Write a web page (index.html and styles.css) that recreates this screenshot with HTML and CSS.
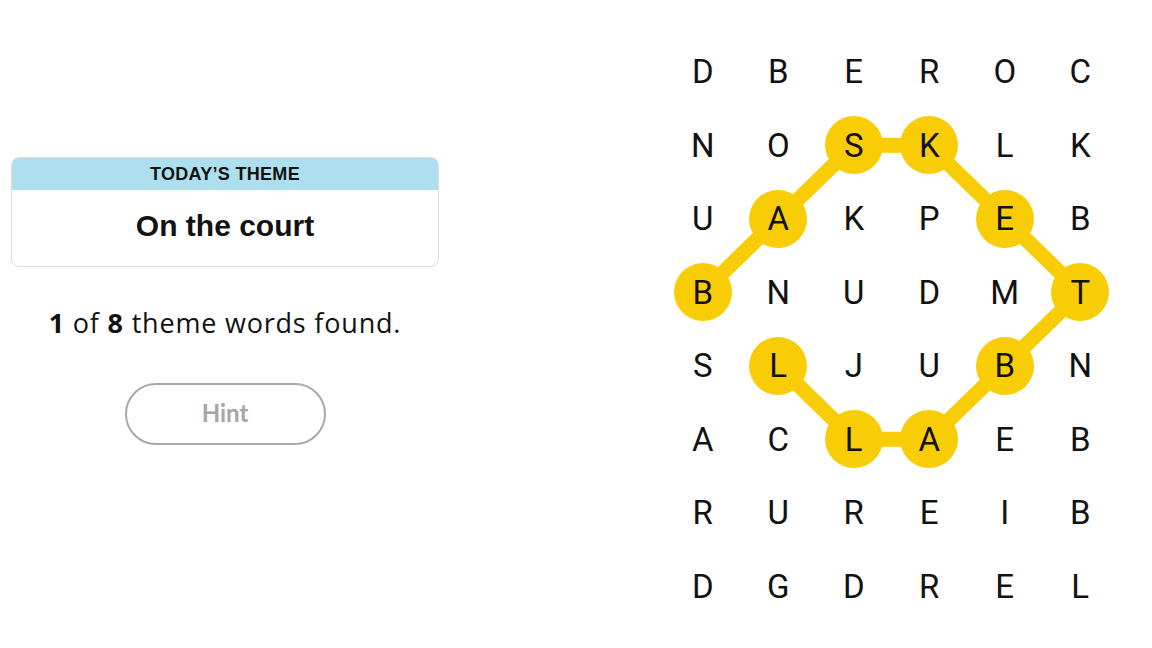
FILE: index.html
```html
<!DOCTYPE html>
<html lang="en">
<head>
<meta charset="utf-8">
<title>Strands</title>
<link rel="stylesheet" href="styles.css">
</head>
<body>
<main class="page">
  <section class="side">
    <div class="theme-card">
      <div class="theme-head">TODAY’S THEME</div>
      <div class="theme-body">On the court</div>
    </div>
    <p class="progress"><b>1</b> of <b>8</b> theme words found.</p>
    <button class="hint" type="button">Hint</button>
  </section>
  <section class="board">
    <svg class="path" width="453" height="588" viewBox="0 0 453 588" aria-hidden="true">
      <polyline points="37.75,257.25 113.25,183.75 188.75,110.25 264.25,110.25 339.75,183.75 415.25,257.25 339.75,330.75 264.25,404.25 188.75,404.25 113.25,330.75" fill="none" stroke="#f8cd05" stroke-width="15" stroke-linejoin="round" stroke-linecap="round"/>
    </svg>
    <div class="grid">
      <span class="cell">D</span><span class="cell">B</span><span class="cell">E</span><span class="cell">R</span><span class="cell">O</span><span class="cell">C</span>
      <span class="cell">N</span><span class="cell">O</span><span class="cell on">S</span><span class="cell on">K</span><span class="cell">L</span><span class="cell">K</span>
      <span class="cell">U</span><span class="cell on">A</span><span class="cell">K</span><span class="cell">P</span><span class="cell on">E</span><span class="cell">B</span>
      <span class="cell on">B</span><span class="cell">N</span><span class="cell">U</span><span class="cell">D</span><span class="cell">M</span><span class="cell on">T</span>
      <span class="cell">S</span><span class="cell on">L</span><span class="cell">J</span><span class="cell">U</span><span class="cell on">B</span><span class="cell">N</span>
      <span class="cell">A</span><span class="cell">C</span><span class="cell on">L</span><span class="cell on">A</span><span class="cell">E</span><span class="cell">B</span>
      <span class="cell">R</span><span class="cell">U</span><span class="cell">R</span><span class="cell">E</span><span class="cell">I</span><span class="cell">B</span>
      <span class="cell">D</span><span class="cell">G</span><span class="cell">D</span><span class="cell">R</span><span class="cell">E</span><span class="cell">L</span>
    </div>
  </section>
</main>
</body>
</html>
```
FILE: styles.css
```css
html, body {
  margin: 0;
  padding: 0;
  background: #ffffff;
}
body {
  width: 1152px;
  height: 648px;
  overflow: hidden;
  font-family: "Liberation Sans", Arial, sans-serif;
  color: #121212;
}
.page {
  display: flex;
  align-items: flex-start;
}
.side {
  width: 428px;
  margin-left: 11px;
  padding-top: 157px;
  display: flex;
  flex-direction: column;
  align-items: center;
}
.theme-card {
  width: 100%;
  box-sizing: border-box;
  border: 1px solid #dcdcdc;
  border-radius: 8px;
  overflow: hidden;
  height: 110px;
}
.theme-head {
  background: #aedfee;
  height: 32px;
  line-height: 33px;
  text-align: center;
  font-size: 18px;
  font-weight: 700;
  letter-spacing: 0.3px;
}
.theme-body {
  text-align: center;
  font-size: 30px;
  font-weight: 700;
  line-height: 30px;
  padding-top: 21px;
}
.progress {
  margin: 40px 0 0;
  font-family: "Open Sans", "Liberation Sans", sans-serif;
  font-size: 27px;
  letter-spacing: 0.8px;
  line-height: 32px;
  text-align: center;
  color: #121212;
}
.progress b {
  font-weight: 700;
}
.hint {
  margin-top: 44px;
  width: 201px;
  height: 62px;
  border: 2px solid #a9a9a9;
  border-radius: 31px;
  background: #ffffff;
  color: #a6a6a6;
  font-family: "Lato", "Liberation Sans", sans-serif;
  font-size: 24px;
  font-weight: 700;
  padding: 0 0 3px;
}
.board {
  position: relative;
  margin-left: 226px;
  margin-top: 35px;
  width: 453px;
  height: 588px;
}
.path {
  position: absolute;
  left: 0;
  top: 0;
}
.grid {
  position: relative;
  z-index: 0;
  display: grid;
  grid-template-columns: repeat(6, 75.5px);
  grid-template-rows: repeat(8, 73.5px);
}
.cell {
  position: relative;
  display: flex;
  align-items: center;
  justify-content: center;
  font-family: "Roboto", "Liberation Sans", sans-serif;
  font-size: 33px;
  color: #121212;
}
.cell.on::before {
  content: "";
  position: absolute;
  left: 50%;
  top: 50%;
  width: 58px;
  height: 58px;
  margin: -29px 0 0 -29px;
  border-radius: 50%;
  background: #f8cd05;
  z-index: -1;
}
```
